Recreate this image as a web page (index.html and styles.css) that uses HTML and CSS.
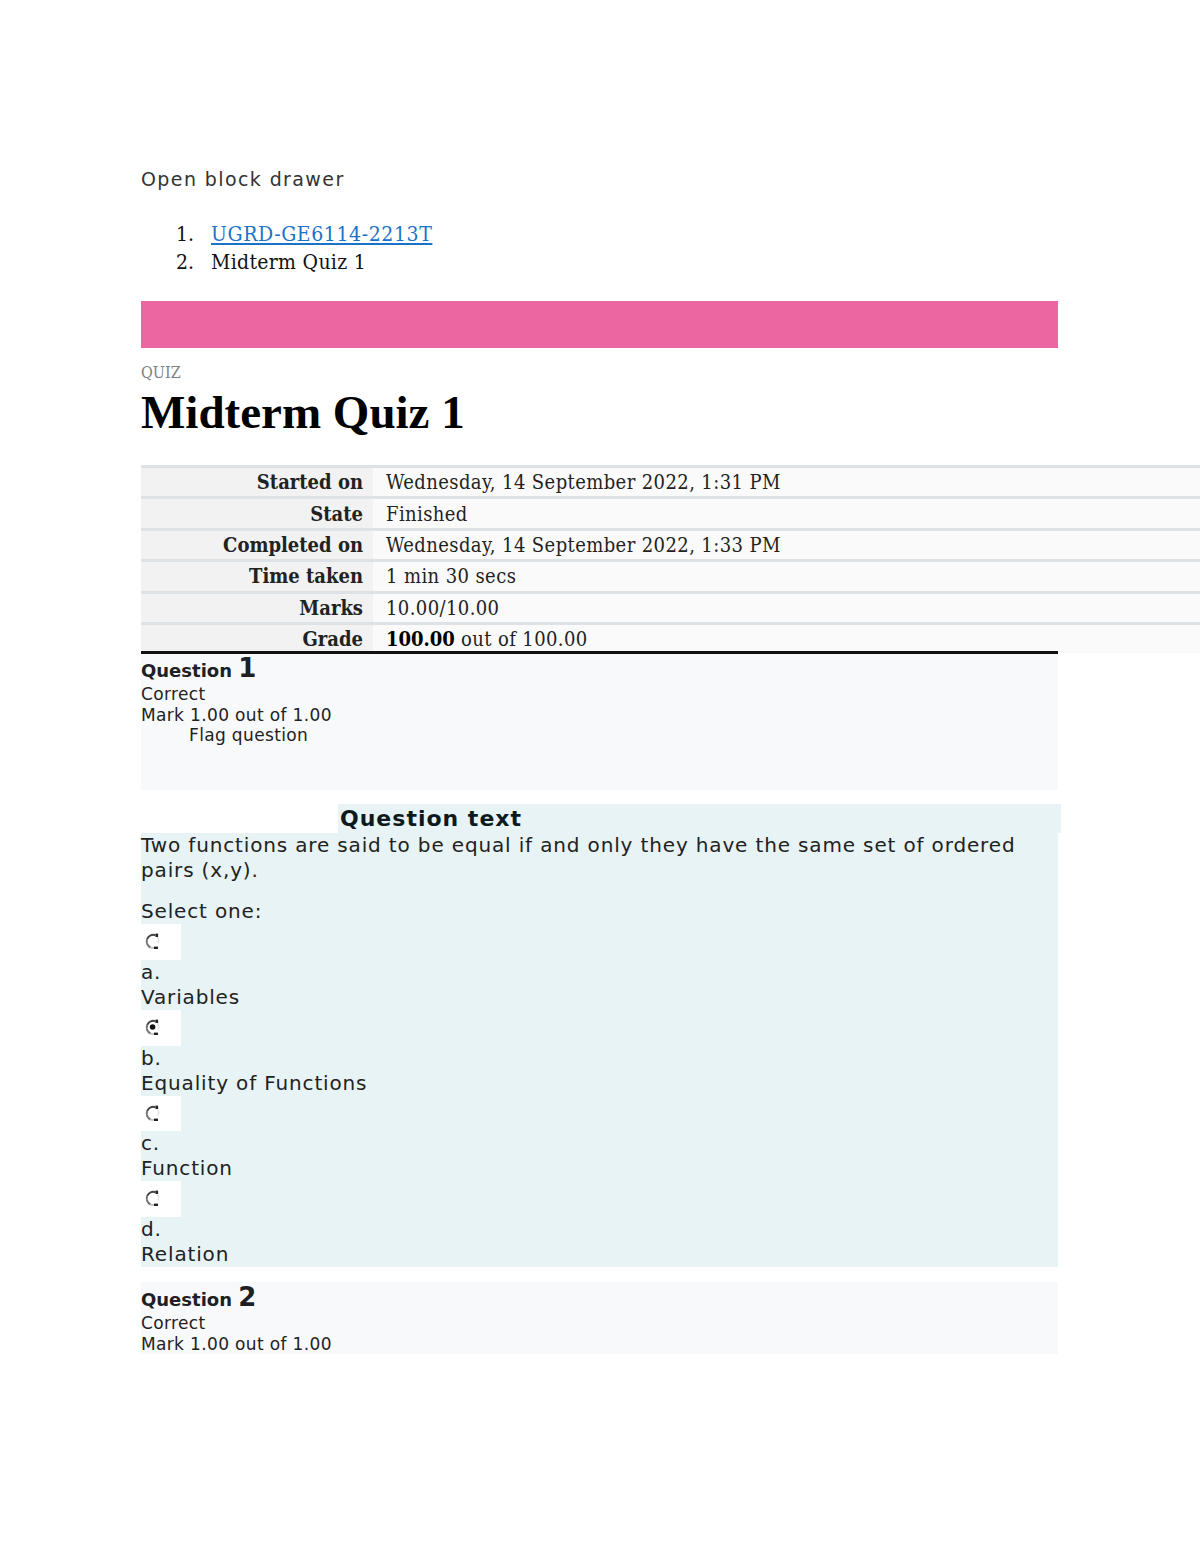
FILE: index.html
```html
<!DOCTYPE html>
<html>
<head>
<meta charset="utf-8">
<link rel="stylesheet" href="styles.css">
</head>
<body>
<div class="page">
  <div class="drawer">Open block drawer</div>
  <ol class="crumbs">
    <li><span class="n">1.</span><a href="#">UGRD-GE6114-2213T</a></li>
    <li><span class="n">2.</span><span>Midterm Quiz 1</span></li>
  </ol>
  <div class="banner"></div>
  <div class="kind">QUIZ</div>
  <h1 class="title">Midterm Quiz 1</h1>
  <table class="summary">
    <tr><th>Started on</th><td>Wednesday, 14 September 2022, 1:31 PM</td></tr>
    <tr><th>State</th><td>Finished</td></tr>
    <tr><th>Completed on</th><td>Wednesday, 14 September 2022, 1:33 PM</td></tr>
    <tr><th>Time taken</th><td>1 min 30 secs</td></tr>
    <tr><th>Marks</th><td>10.00/10.00</td></tr>
    <tr class="last"><th>Grade</th><td><b>100.00</b> out of 100.00</td></tr>
  </table>
  <div class="rule"></div>
  <div class="qinfo q1">
    <div class="qno">Question <span class="num">1</span></div>
    <div>Correct</div>
    <div>Mark 1.00 out of 1.00</div>
    <div class="flag">Flag question</div>
  </div>
  <div class="qtext-wrap">
    <div class="qtext-head"><span>Question text</span></div>
    <div class="qcontent">
      <p class="prompt">Two functions are said to be equal if and only they have the same set of ordered pairs (x,y).</p>
      <div class="select">Select one:</div>
      <div class="radio"><svg width="20" height="22" viewBox="0 0 20 22"><path d="M12.5 5.2 A6.6 6.6 0 0 0 4.2 9" fill="none" stroke="#444" stroke-width="2"/><path d="M4.2 9 A6.6 6.6 0 0 0 7.5 17.5" fill="none" stroke="#777" stroke-width="2"/><path d="M7.5 17.5 A6.6 6.6 0 0 0 12 17.6" fill="none" stroke="#bbb" stroke-width="1.6"/><path d="M14.5 7 A6.6 6.6 0 0 1 15 13.5" fill="none" stroke="#e4e4e4" stroke-width="1.5"/><rect x="12.5" y="3.6" width="2.6" height="3.4" fill="#222"/><rect x="11" y="16.6" width="4" height="2.4" fill="#222"/></svg></div>
      <div class="opt">a.</div>
      <div class="opt">Variables</div>
      <div class="radio"><svg width="20" height="22" viewBox="0 0 20 22"><path d="M12.5 5.2 A6.6 6.6 0 0 0 4.2 9" fill="none" stroke="#444" stroke-width="2"/><path d="M4.2 9 A6.6 6.6 0 0 0 7.5 17.5" fill="none" stroke="#777" stroke-width="2"/><path d="M7.5 17.5 A6.6 6.6 0 0 0 12 17.6" fill="none" stroke="#bbb" stroke-width="1.6"/><path d="M14.5 7 A6.6 6.6 0 0 1 15 13.5" fill="none" stroke="#e4e4e4" stroke-width="1.5"/><rect x="12.5" y="3.6" width="2.6" height="3.4" fill="#222"/><rect x="11" y="16.6" width="4" height="2.4" fill="#222"/><circle cx="9.6" cy="11" r="2.8" fill="#111"/></svg></div>
      <div class="opt">b.</div>
      <div class="opt">Equality of Functions</div>
      <div class="radio"><svg width="20" height="22" viewBox="0 0 20 22"><path d="M12.5 5.2 A6.6 6.6 0 0 0 4.2 9" fill="none" stroke="#444" stroke-width="2"/><path d="M4.2 9 A6.6 6.6 0 0 0 7.5 17.5" fill="none" stroke="#777" stroke-width="2"/><path d="M7.5 17.5 A6.6 6.6 0 0 0 12 17.6" fill="none" stroke="#bbb" stroke-width="1.6"/><path d="M14.5 7 A6.6 6.6 0 0 1 15 13.5" fill="none" stroke="#e4e4e4" stroke-width="1.5"/><rect x="12.5" y="3.6" width="2.6" height="3.4" fill="#222"/><rect x="11" y="16.6" width="4" height="2.4" fill="#222"/></svg></div>
      <div class="opt">c.</div>
      <div class="opt">Function</div>
      <div class="radio"><svg width="20" height="22" viewBox="0 0 20 22"><path d="M12.5 5.2 A6.6 6.6 0 0 0 4.2 9" fill="none" stroke="#444" stroke-width="2"/><path d="M4.2 9 A6.6 6.6 0 0 0 7.5 17.5" fill="none" stroke="#777" stroke-width="2"/><path d="M7.5 17.5 A6.6 6.6 0 0 0 12 17.6" fill="none" stroke="#bbb" stroke-width="1.6"/><path d="M14.5 7 A6.6 6.6 0 0 1 15 13.5" fill="none" stroke="#e4e4e4" stroke-width="1.5"/><rect x="12.5" y="3.6" width="2.6" height="3.4" fill="#222"/><rect x="11" y="16.6" width="4" height="2.4" fill="#222"/></svg></div>
      <div class="opt">d.</div>
      <div class="opt">Relation</div>
    </div>
  </div>
  <div class="qinfo q2">
    <div class="qno">Question <span class="num">2</span></div>
    <div>Correct</div>
    <div>Mark 1.00 out of 1.00</div>
  </div>
</div>
</body>
</html>
```
FILE: styles.css
```css
html, body {
  margin: 0;
  padding: 0;
  background: #ffffff;
}
.page {
  padding: 165px 0 0 141px;
  width: 1059px;
  overflow: hidden;
}
.drawer {
  font-family: "DejaVu Sans", sans-serif;
  font-size: 19px;
  letter-spacing: 1.4px;
  color: #333;
  line-height: 28px;
  width: 917px;
}
.crumbs {
  margin: 27px 0 0 0;
  padding-left: 35px;
  list-style: none;
  font-family: "DejaVu Serif Condensed", "DejaVu Serif", serif;
  font-stretch: condensed;
  font-size: 21px;
  letter-spacing: 0.3px;
  line-height: 28px;
  color: #111;
  width: 882px;
}
.crumbs li {
  display: flex;
}
.crumbs .n {
  width: 35px;
  letter-spacing: 0;
}
.crumbs a {
  color: #1a73c9;
  text-decoration: underline;
  letter-spacing: 0.6px;
}
.banner {
  margin-top: 25px;
  height: 47px;
  width: 917px;
  background: #ec66a1;
}
.kind {
  margin-top: 15px;
  font-family: "DejaVu Serif Condensed", "DejaVu Serif", serif;
  font-stretch: condensed;
  font-size: 16px;
  color: #7a7f85;
  line-height: 20px;
}
.title {
  margin: 5px 0 0 0;
  font-family: "Liberation Serif", serif;
  font-weight: bold;
  font-size: 47px;
  line-height: 48px;
  color: #000;
}
.summary {
  margin-top: 29px;
  border-collapse: collapse;
  width: 1059px;
  font-family: "DejaVu Serif Condensed", "DejaVu Serif", serif;
  font-stretch: condensed;
  font-size: 20px;
  color: #222;
}
.summary tr {
  border-top: 3px solid #dee2e6;
}
.summary th {
  width: 222px;
  text-align: right;
  font-weight: bold;
  background: #f2f2f2;
  padding: 0 10px 0 0;
  height: 28.4px;
  line-height: 28px;
}
.summary td {
  background: #fafafa;
  padding: 0 0 0 13px;
  line-height: 28px;
  letter-spacing: 0.4px;
}
.summary b { font-weight: bold; color: #000; letter-spacing: 0; }
.rule {
  width: 917px;
  height: 3px;
  background: #111;
  margin-top: -2px;
  position: relative;
}
.qinfo {
  width: 917px;
  background: #f8f9fa;
  font-family: "DejaVu Sans", sans-serif;
  font-size: 17px;
  letter-spacing: 0.35px;
  line-height: 20.5px;
  color: #222;
}
.q1 {
  height: 136px;
}
.qno {
  font-weight: bold;
  font-size: 18px;
  line-height: 26px;
  padding-top: 1px;
  letter-spacing: 0;
  color: #1d2125;
}
.qno .num {
  font-size: 26px;
}
.flag {
  padding-left: 48px;
}
.qtext-wrap {
  margin-top: 14px;
  width: 920px;
  font-family: "DejaVu Sans", sans-serif;
  color: #222;
}
.qtext-head {
  padding-left: 197px;
  height: 29px;
}
.qtext-head span {
  display: block;
  background: #e7f3f5;
  font-weight: bold;
  font-size: 22px;
  line-height: 29px;
  letter-spacing: 1px;
  padding-left: 2px;
  color: #0d1a1d;
}
.qcontent {
  width: 917px;
  background: #e7f3f5;
  font-size: 20px;
  letter-spacing: 0.85px;
  line-height: 25px;
}
.prompt {
  margin: 0;
}
.select {
  margin-top: 16px;
}
.radio {
  width: 40px;
  height: 35.7px;
  background: #ffffff;
}
.radio svg {
  display: block;
  padding: 6px 0 0 2px;
}
.q2 {
  margin-top: 15px;
  height: 72px;
}
.q2 .qno {
  padding-top: 2px;
}
```
